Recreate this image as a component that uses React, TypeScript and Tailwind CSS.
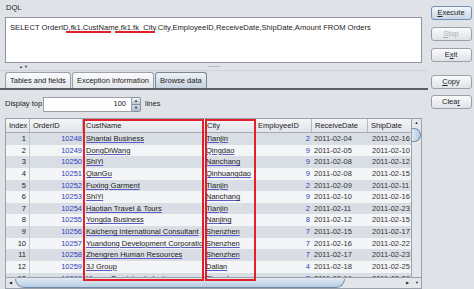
import React from "react";

const rows = [
  ["1", "10248", "Shantai Business", "Tianjin", "2", "2011-02-04", "2011-02-16"],
  ["2", "10249", "DongDiWang", "Qingdao", "9", "2011-02-05", "2011-02-10"],
  ["3", "10250", "ShiYi", "Nanchang", "9", "2011-02-08", "2011-02-12"],
  ["4", "10251", "QianGu", "Qinhuangdao", "9", "2011-02-08", "2011-02-15"],
  ["5", "10252", "Fuxing Garment", "Tianjin", "2", "2011-02-09", "2011-02-11"],
  ["6", "10253", "ShiYi", "Nanchang", "9", "2011-02-10", "2011-02-16"],
  ["7", "10254", "Haotian Travel & Tours", "Tianjin", "2", "2011-02-11", "2011-02-23"],
  ["8", "10255", "Yongda Business", "Nanjing", "8", "2011-02-12", "2011-02-15"],
  ["9", "10256", "Kaicheng International Consultant", "Shenzhen", "7", "2011-02-15", "2011-02-17"],
  ["10", "10257", "Yuandong Development Corporation", "Shenzhen", "7", "2011-02-16", "2011-02-22"],
  ["11", "10258", "Zhengren Human Resources", "Shenzhen", "7", "2011-02-17", "2011-02-23"],
  ["12", "10259", "3J Group", "Dalian", "4", "2011-02-18", "2011-02-25"],
  ["13", "10260", "Yiquan Precision Industry", "Shenzhen", "7", "2011-02-19", "2011-02-28"],
];

const cols = "grid-cols-[24px_53px_121px_51px_57px_56px_45px]";

const Btn = ({ label, u, disabled = false, primary = false, className = "" }: { label: string; u: number; disabled?: boolean; primary?: boolean; className?: string }) => (
  <div
    className={`h-[14px] w-[41px] flex items-center justify-center rounded-[3px] border text-[7.5px] bg-gradient-to-b ${
      primary ? "border-[#6f8fb3] from-[#f4f7fb] to-[#c9d6e6]" : "border-[#9aa1ab] from-[#fbfbfc] to-[#dfe2e7]"
    } ${disabled ? "text-[#a9adb4]" : "text-[#222]"} ${className}`}
  >
    {label.slice(0, u)}
    <span className="underline">{label[u]}</span>
    {label.slice(u + 1)}
  </div>
);

export default function App() {
  return (
    <div className="w-[474px] h-[289px] overflow-hidden bg-[#dfe2e7] font-['Liberation_Sans',Arial,sans-serif] text-[#222] flex">
      {/* left side */}
      <div className="w-[428px] flex flex-col pl-[5px]">
        <div className="h-[17px] text-[7.5px] pt-[2px] pl-[1px]">DQL</div>
        <div className="h-[46px] w-[417px] bg-white border border-[#8f96a1] px-[4px] pt-[5px] text-[7.6px] leading-[10px] relative">
          SELECT OrderID,fk1.CustName,fk1.fk_City.City,EmployeeID,ReceiveDate,ShipDate,Amount FROM Orders
          <div className="absolute left-[60px] top-[13px] w-[45px] h-[2px] bg-[#e0202a]" />
          <div className="absolute left-[109px] top-[13px] w-[40px] h-[2px] bg-[#e0202a]" />
        </div>

        {/* splitter */}
        <div className="h-[8px] -ml-[5px] w-[428px] flex items-center relative">
          <span className="ml-[19px] text-[4px] leading-none text-[#333]">▲ ▼</span>
          <div className="absolute left-[208px] top-[3px] w-[12px] h-[1px] bg-[#b8bdc5]" />
          <div className="absolute left-0 right-0 bottom-0 h-px bg-[#cfd3d9]" />
        </div>

        {/* tabs */}
        <div className="h-[18px] -ml-[5px] w-[428px] flex items-end pl-[5px] gap-px border-b-2 border-[#5a5f66] mt-px">
          <div className="h-[16px] px-[4px] flex items-center text-[7.5px] border border-b-0 border-[#9aa1ab] rounded-t-[3px] bg-gradient-to-b from-[#fbfbfc] to-[#e3e6ea]">Tables and fields</div>
          <div className="h-[16px] px-[4px] flex items-center text-[7.5px] border border-b-0 border-[#9aa1ab] rounded-t-[3px] bg-gradient-to-b from-[#fbfbfc] to-[#e3e6ea]">Exception information</div>
          <div className="h-[16px] px-[4px] flex items-center text-[7.5px] border border-b-0 border-[#7d8794] rounded-t-[3px] bg-gradient-to-b from-[#eef2f7] to-[#c8d3df]">Browse data</div>
        </div>

        {/* display top */}
        <div className="h-[28px] flex items-center text-[7.5px]">
          <span className="w-[38px] whitespace-nowrap">Display top</span>
          <div className="flex h-[15px]">
            <div className="w-[89px] bg-white border border-[#9aa1ab] flex items-center justify-end pr-[5px]">100</div>
            <div className="w-[9px] flex flex-col border border-l-0 border-[#8a93a0] rounded-r-[2px] overflow-hidden">
              <div className="flex-1 bg-gradient-to-b from-[#f0f4f8] to-[#b9c6d4] text-[4px] leading-none flex items-center justify-center">▲</div>
              <div className="flex-1 bg-gradient-to-b from-[#d2dbe5] to-[#aebccb] text-[4px] leading-none flex items-center justify-center border-t border-[#8a93a0]">▼</div>
            </div>
          </div>
          <span className="ml-[4px]">lines</span>
        </div>

        {/* table */}
        <div className="w-[417px] flex-1 border border-[#9aa1ab] bg-[#f3f4f6] flex flex-col relative overflow-hidden">
          <div className="flex flex-1 overflow-hidden">
            <div className="w-[406px] overflow-hidden">
              <div className={`grid ${cols} h-[14px] text-[7.5px] bg-gradient-to-b from-[#f4f5f7] to-[#e1e4e9] border-b border-[#a4abb5]`}>
                {["Index", "OrderID", "CustName", "City", "EmployeeID", "ReceiveDate", "ShipDate"].map((h) => (
                  <div key={h} className="px-[3px] flex items-center border-r border-[#b4bac3] whitespace-nowrap overflow-hidden">{h}</div>
                ))}
              </div>
              {rows.map((r, i) => (
                <div key={i} className={`grid ${cols} h-[11.65px] text-[7.5px] leading-[11.65px] ${i % 2 === 0 ? "bg-[#d9dde4]" : "bg-[#f4f5f7]"}`}>
                  <div className="text-right pr-[3px] border-r border-[#c5cad2]">{r[0]}</div>
                  <div className="text-right pr-[1px] text-[#2f3fc0]">{r[1]}</div>
                  <div className="pl-[3px] whitespace-nowrap overflow-hidden"><span className="underline decoration-[#5b5bc8]">{r[2]}</span></div>
                  <div className="pl-[2px] whitespace-nowrap overflow-hidden"><span className="underline decoration-[#5b5bc8]">{r[3]}</span></div>
                  <div className="text-right pr-[2px] text-[#2f3fc0]">{r[4]}</div>
                  <div className="pl-[2px] text-[#333]">{r[5]}</div>
                  <div className="pl-[4px] text-[#333] whitespace-nowrap">{r[6]}</div>
                </div>
              ))}
            </div>
            {/* vertical scrollbar */}
            <div className="w-[10px] border-l border-[#9aa1ab] bg-[#e3e6ea] flex flex-col items-center">
              <div className="text-[4px] leading-none mt-[2px]">▲</div>
              <div className="w-[9px] h-[14px] mt-[3px] rounded-r-full border border-l-0 border-[#6f8aa8] bg-gradient-to-r from-[#dce8f3] to-[#b7cde2]" />
            </div>
          </div>
          {/* horizontal scrollbar */}
          <div className="h-[11px] border-t border-[#9aa1ab] bg-[#e3e6ea] flex items-center">
            <span className="text-[4px] leading-none ml-[3px]">◀</span>
            <div className="ml-[3px] w-[330px] h-[9px] rounded-b-full border border-t-0 border-[#6f8aa8] bg-gradient-to-b from-[#dce8f3] to-[#b7cde2]" />
            <span className="text-[4px] leading-none ml-auto">▶</span>
            <span className="text-[4px] leading-none ml-[6px] mr-[2px]">▼</span>
          </div>
          {/* red highlight boxes */}
          <div className="absolute left-[77px] top-0 w-[121px] h-[162px] border-2 border-[#e0202a]" />
          <div className="absolute left-[199px] top-0 w-[51px] h-[162px] border-2 border-[#e0202a]" />
        </div>
      </div>

      {/* right buttons */}
      <div className="flex-1 flex flex-col items-center">
        <Btn label="Execute" u={0} primary className="mt-[6px]" />
        <Btn label="Stop" u={0} disabled className="mt-[7px]" />
        <Btn label="Exit" u={1} className="mt-[7px]" />
        <Btn label="Copy" u={0} className="mt-[13px]" />
        <Btn label="Clear" u={4} className="mt-[6px]" />
      </div>
    </div>
  );
}
